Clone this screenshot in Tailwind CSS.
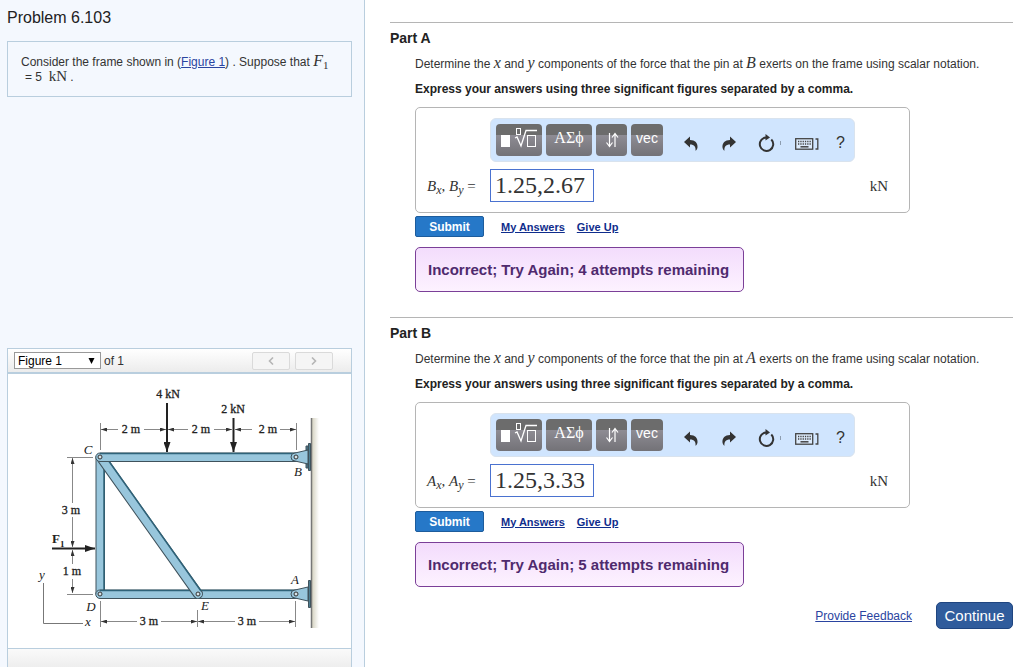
<!DOCTYPE html>
<html lang="en">
<head>
    <meta charset="UTF-8">
    <meta name="viewport" content="width=device-width, initial-scale=1.0">
    <title>Problem 6.103</title>
    <script src="https://cdn.jsdelivr.net/npm/@tailwindcss/browser@4"></script>
</head>
<body class="bg-white font-['Liberation_Sans',Arial,sans-serif] text-xs leading-4 text-[#333]">

    <!-- shared toolbar icons -->
    <svg class="hidden">
        <symbol id="icon-root" viewBox="0 0 36 24">
            <rect x="0" y="11" width="9" height="12" fill="#fff"/>
            <rect x="15.500" y="4.500" width="4" height="6" fill="none" stroke="#fff"/>
            <path d="M14 14l2-1 4 9 5-15.500h11" fill="none" stroke="#fff" stroke-width="1.300"/>
            <rect x="26.500" y="11.500" width="8" height="11" fill="none" stroke="#fff"/>
        </symbol>
        <symbol id="icon-updown" viewBox="0 0 14 16">
            <path d="M4.500 1v13M1.500 10.500l3 4 3-4M10 15V2M7 5.500l3-4 3 4" fill="none" stroke="#fff" stroke-width="1.200"/>
        </symbol>
        <symbol id="icon-undo" viewBox="0 0 14 15">
            <path d="M0 6L6 0.500V4c5 0 8 3 7.500 7.500-.2 1.500-1 2.500-2 3.300C12 11 10.500 8.500 6 8.500v3z" fill="#333"/>
        </symbol>
        <symbol id="icon-reset" viewBox="0 0 17 18">
            <path d="M8.500 3.500A6.700 6.700 0 1 0 13.300 5.500" fill="none" stroke="#333" stroke-width="2"/>
            <path d="M7.500 0l4.500 3.500L7.500 6.500z" fill="#333"/>
        </symbol>
        <symbol id="icon-keyboard" viewBox="0 0 25 12">
            <rect x=".7" y=".7" width="17" height="10.500" fill="#dcebfc" stroke="#444" stroke-width="1.300"/>
            <path d="M3 3.500h13M3 6h13" stroke="#444" stroke-width="1.500" stroke-dasharray="1.300 1"/>
            <path d="M5.500 8.800h8" stroke="#444" stroke-width="1.500"/>
            <path d="M20.500 1h2.300v10h-2.300" fill="none" stroke="#444" stroke-width="1.300"/>
        </symbol>
    </svg>

    <div class="flex min-h-screen">

        <!-- Problem statement and figure -->
        <aside class="flex w-[365px] shrink-0 flex-col border-r border-[#b9cede] bg-[#f4f8fe] pl-[7px] pr-3">
            <h1 class="pt-2 text-base leading-5 text-[#222]">Problem 6.103</h1>
            <div class="mt-[13px] border border-[#b9cede] px-[13px] pt-3 pb-3 leading-[14px]">
                <p class="whitespace-nowrap">Consider the frame shown in (<a href="#figure" class="text-[#2a44a0] underline">Figure 1</a>) . Suppose that <span class="font-['Liberation_Serif',serif] text-base leading-[14px]"><i>F</i><sub class="text-[11px]">1</sub></span></p>
                <p class="pl-1">= 5 &nbsp;<span class="font-['Liberation_Serif',serif] text-[15px] leading-[14px]">kN</span> .</p>
            </div>

            <section id="figure" class="mt-auto">
                <div class="flex h-[25px] items-center border border-[#b9cede] bg-linear-to-b from-white to-[#ececec] pl-1.5 pr-[18px]">
                    <span class="relative flex">
                        <select id="figure-select" aria-label="Figure" class="h-[17px] w-[87px] appearance-none border border-[#999] bg-white pl-[3px] text-xs leading-[14px] text-black">
                            <option>Figure 1</option>
                        </select>
                        <svg class="pointer-events-none absolute top-[6px] right-[6px] h-[6px] w-[7px]" viewBox="0 0 7 6"><path d="M0.500 0h6L3.500 6z" fill="#000"/></svg>
                    </span>
                    <label for="figure-select" class="ml-[3px]">of 1</label>
                    <button aria-label="Previous figure" class="ml-auto flex h-[18px] w-[38px] items-center justify-center rounded-xs border border-[#dadada] bg-[#f5f5f5]">
                        <svg class="h-2 w-[6px]" viewBox="0 0 6 8"><path d="M5 .5L1.500 4 5 7.500" fill="none" stroke="#b5b5b5" stroke-width="1.600"/></svg>
                    </button>
                    <button aria-label="Next figure" class="ml-[5px] flex h-[18px] w-[38px] items-center justify-center rounded-xs border border-[#dadada] bg-[#f5f5f5]">
                        <svg class="h-2 w-[6px]" viewBox="0 0 6 8"><path d="M1 .5L4.500 4 1 7.500" fill="none" stroke="#b5b5b5" stroke-width="1.600"/></svg>
                    </button>
                </div>

                <div class="border-x border-t border-[#b9cede] bg-white">
                    <svg class="block w-full" viewBox="8 374 343 274" font-family="'Liberation Serif', serif" font-size="12" fill="#222">
                        <defs>
                            <linearGradient id="wall">
                                <stop offset="0" stop-color="#cfccb8"/>
                                <stop offset="1" stop-color="#fff"/>
                            </linearGradient>
                            <marker id="dim" viewBox="0 0 6 4" refX="6" refY="2" markerWidth="6" markerHeight="4" markerUnits="userSpaceOnUse" orient="auto">
                                <path d="M0 0l6 2-6 2z" fill="#333"/>
                            </marker>
                            <marker id="force" viewBox="0 0 10 7" refX="10" refY="3.500" markerWidth="10" markerHeight="7" markerUnits="userSpaceOnUse" orient="auto">
                                <path d="M0 0l10 3.500L0 7z" fill="#222"/>
                            </marker>
                        </defs>

                        <!-- wall -->
                        <rect x="311" y="418" width="8" height="210" fill="url(#wall)"/>
                        <path d="M311.500 418v210" stroke="#777" stroke-width="1.500"/>

                        <!-- members -->
                        <g stroke="#3f525c" stroke-width="1">
                            <rect x="96" y="457" width="8.500" height="137" fill="#98c6dc"/>
                            <path d="M104 461v129" stroke="#2f6379" stroke-width="1.500"/>
                            <path d="M100 590h196a4 4 0 0 1 0 8.500H100a4 4 0 0 1 0-8.500z" fill="#98c6dc"/>
                            <path d="M100 590.500h196" stroke="#2f6379" stroke-width="1.500"/>
                            <path d="M102 459L198 594" stroke-width="10" stroke-linecap="round"/>
                            <path d="M102 459L198 594" stroke="#98c6dc" stroke-width="8" stroke-linecap="round"/>
                            <path d="M107 458.500l94 132.500" stroke="#2f6379" stroke-width="1.500"/>
                            <path d="M100 453h196a4 4 0 0 1 0 8.500H100a4 4 0 0 1 0-8.500z" fill="#98c6dc"/>
                            <path d="M100 453.500h196" stroke="#2f6379" stroke-width="1.500"/>
                            <path d="M308 450l-13 3a4 4 0 0 0 0 8l13 3zM308 587l-13 3a4 4 0 0 0 0 8l13 3z" fill="#98c6dc"/>
                            <path d="M308.500 443.500h2v27h-2zM308.500 580.500h2v27h-2z" fill="#4f7d90"/>
                            <path d="M306 446h2v4h-2zM306 464h2v4h-2z" fill="#4f7d90"/>
                        </g>
                        <g fill="#d5e2e8" stroke="#333" stroke-width="1">
                            <circle cx="100" cy="457" r="2"/>
                            <circle cx="296" cy="457" r="2"/>
                            <circle cx="100" cy="594" r="2"/>
                            <circle cx="198" cy="594" r="2"/>
                            <circle cx="296" cy="594" r="2"/>
                        </g>

                        <!-- dimension lines -->
                        <g stroke="#888" stroke-width="1" fill="none">
                            <path d="M100.500 423v27M296.500 423v27M100.500 601v26M197.500 610v17M295.500 601v26M67 457.500h26M67 594.500h26"/>
                            <path d="M43.500 583v40.500H83" stroke="#777"/>
                            <path d="M118 429.500h-17" marker-end="url(#dim)"/>
                            <path d="M144 429.500h22" marker-end="url(#dim)"/>
                            <path d="M188 429.500h-20" marker-end="url(#dim)"/>
                            <path d="M214 429.500h18" marker-end="url(#dim)"/>
                            <path d="M252 429.500h-17" marker-end="url(#dim)"/>
                            <path d="M280 429.500h16" marker-end="url(#dim)"/>
                            <path d="M137 621.500h-36" marker-end="url(#dim)"/>
                            <path d="M161 621.500h36" marker-end="url(#dim)"/>
                            <path d="M235 621.500h-37" marker-end="url(#dim)"/>
                            <path d="M259 621.500h36" marker-end="url(#dim)"/>
                            <path d="M72.500 503v-45" marker-end="url(#dim)"/>
                            <path d="M72.500 517v30" marker-end="url(#dim)"/>
                            <path d="M72.500 564v-14" marker-end="url(#dim)"/>
                            <path d="M72.500 579v14" marker-end="url(#dim)"/>
                        </g>

                        <!-- forces -->
                        <g stroke="#222" stroke-width="2">
                            <path d="M167 403v49" marker-end="url(#force)"/>
                            <path d="M233.500 418v34" marker-end="url(#force)"/>
                            <path d="M52 548.500h43" marker-end="url(#force)"/>
                        </g>

                        <g text-anchor="middle" stroke="#222" stroke-width=".3">
                            <text x="168" y="398">4 kN</text>
                            <text x="233" y="413">2 kN</text>
                            <text x="131" y="433">2 m</text>
                            <text x="201" y="433">2 m</text>
                            <text x="268" y="433">2 m</text>
                            <text x="71" y="514">3 m</text>
                            <text x="72" y="575">1 m</text>
                            <text x="149" y="625">3 m</text>
                            <text x="247" y="625">3 m</text>
                        </g>
                        <g text-anchor="middle" font-style="italic" font-size="13">
                            <text x="88" y="454">C</text>
                            <text x="298" y="476">B</text>
                            <text x="91" y="611">D</text>
                            <text x="205" y="610">E</text>
                            <text x="295" y="584">A</text>
                            <text x="42" y="579">y</text>
                            <text x="88" y="626">x</text>
                        </g>
                        <text x="52" y="543" font-weight="bold" font-size="13">F</text>
                        <text x="60" y="547" font-weight="bold" font-size="9">1</text>
                    </svg>
                </div>
                <div class="h-[19px] border-x border-t border-[#b9cede] bg-linear-to-b from-[#fafafa] to-[#eee]"></div>
            </section>
        </aside>

        <!-- Answer parts -->
        <main class="min-w-0 flex-1 pt-[22px] pr-[11px] pb-8 pl-[25px]">

            <section class="border-t border-[#b5b5b5] pb-[25px]">
                <h2 class="pt-[5px] text-sm leading-5 font-bold text-[#222]">Part A</h2>
                <div class="pl-[25px]">
                    <p class="mt-[7px] h-4">Determine the <i class="font-['Liberation_Serif',serif] text-base leading-4">x</i> and <i class="font-['Liberation_Serif',serif] text-base leading-4">y</i> components of the force that the pin at <i class="font-['Liberation_Serif',serif] text-base leading-4">B</i> exerts on the frame using scalar notation.</p>
                    <p class="mt-[10px] font-bold text-[#222]">Express your answers using three significant figures separated by a comma.</p>

                    <div class="mt-[10px] max-w-[495px] rounded-[5px] border border-[#b5b5b5] py-[10px] pl-[11px]">
                        <div class="ml-[63px] flex h-11 w-[365px] rounded-md border border-[#d9e3ee] bg-[#d0e5fe] pt-[5px] pl-[5px]">
                            <div class="flex gap-1">
                                <button aria-label="Templates" class="flex h-8 w-[46px] items-start justify-center rounded-sm bg-linear-to-b from-[#6c6c6c] from-35% via-[#8e8c94] via-35% to-[#737277]"><svg class="h-6 w-9"><use href="#icon-root"/></svg></button>
                                <button class="h-8 w-[46px] rounded-sm bg-linear-to-b from-[#6c6c6c] from-35% via-[#8e8c94] via-35% to-[#737277] pb-1 font-['Liberation_Serif',serif] text-base text-white">ΑΣϕ</button>
                                <button aria-label="Arrows" class="flex h-8 w-[31px] items-center justify-center rounded-sm bg-linear-to-b from-[#6c6c6c] from-35% via-[#8e8c94] via-35% to-[#737277]"><svg class="h-4 w-[14px]"><use href="#icon-updown"/></svg></button>
                                <button class="h-8 w-8 rounded-sm bg-linear-to-b from-[#6c6c6c] from-35% via-[#8e8c94] via-35% to-[#737277] pb-1 text-sm text-white">vec</button>
                            </div>
                            <div class="flex h-8 items-center pt-[6px] pl-[21px]">
                                <button aria-label="Undo"><svg class="h-[15px] w-[14px]"><use href="#icon-undo"/></svg></button>
                                <button aria-label="Redo" class="ml-6"><svg class="h-[15px] w-[14px] -scale-x-100"><use href="#icon-undo"/></svg></button>
                                <button aria-label="Reset" class="ml-[22px]"><svg class="h-[18px] w-[17px]"><use href="#icon-reset"/></svg></button>
                                <span class="ml-[5px] h-1 w-px bg-[#8d9db0]"></span>
                                <button aria-label="Keyboard" class="ml-[14px] pt-[2px]"><svg class="h-3 w-[25px]"><use href="#icon-keyboard"/></svg></button>
                                <button aria-label="Help" class="ml-4 text-base leading-4 text-[#333]">?</button>
                            </div>
                        </div>
                        <div class="mt-[7px] flex items-center pr-[21px]">
                            <label for="answer-a" class="w-[63px] font-['Liberation_Serif',serif] text-[15px] leading-5"><i>B<sub class="text-xs">x</sub></i>, <i>B<sub class="text-xs">y</sub></i> =</label>
                            <input id="answer-a" type="text" value="1.25,2.67" class="h-[33px] w-[104px] border border-[#4a72d0] bg-white px-1 font-['Liberation_Serif',serif] text-2xl text-[#333]">
                            <span class="ml-auto font-['Liberation_Serif',serif] text-[15px]">kN</span>
                        </div>
                    </div>

                    <div class="mt-[3px] flex items-center text-[11px] font-bold">
                        <button class="h-[21px] w-[69px] rounded-xs border border-[#1d5c9c] bg-[#2678c8] text-xs text-white">Submit</button>
                        <a href="#" class="ml-[17px] text-[#0f2d8c] underline">My Answers</a>
                        <a href="#" class="ml-3 text-[#0f2d8c] underline">Give Up</a>
                    </div>
                    <div class="mt-[10px] h-[45px] w-[329px] rounded-[5px] border border-[#7b3f98] bg-linear-to-b from-[#f3dcfc] to-[#fdf2ff] pl-3 text-[15px] leading-[43px] font-bold whitespace-nowrap text-[#4f2a6e]">Incorrect; Try Again; 4 attempts remaining</div>
                </div>
            </section>

            <section class="border-t border-[#b5b5b5]">
                <h2 class="pt-[5px] text-sm leading-5 font-bold text-[#222]">Part B</h2>
                <div class="pl-[25px]">
                    <p class="mt-[7px] h-4">Determine the <i class="font-['Liberation_Serif',serif] text-base leading-4">x</i> and <i class="font-['Liberation_Serif',serif] text-base leading-4">y</i> components of the force that the pin at <i class="font-['Liberation_Serif',serif] text-base leading-4">A</i> exerts on the frame using scalar notation.</p>
                    <p class="mt-[10px] font-bold text-[#222]">Express your answers using three significant figures separated by a comma.</p>

                    <div class="mt-[10px] max-w-[495px] rounded-[5px] border border-[#b5b5b5] py-[10px] pl-[11px]">
                        <div class="ml-[63px] flex h-11 w-[365px] rounded-md border border-[#d9e3ee] bg-[#d0e5fe] pt-[5px] pl-[5px]">
                            <div class="flex gap-1">
                                <button aria-label="Templates" class="flex h-8 w-[46px] items-start justify-center rounded-sm bg-linear-to-b from-[#6c6c6c] from-35% via-[#8e8c94] via-35% to-[#737277]"><svg class="h-6 w-9"><use href="#icon-root"/></svg></button>
                                <button class="h-8 w-[46px] rounded-sm bg-linear-to-b from-[#6c6c6c] from-35% via-[#8e8c94] via-35% to-[#737277] pb-1 font-['Liberation_Serif',serif] text-base text-white">ΑΣϕ</button>
                                <button aria-label="Arrows" class="flex h-8 w-[31px] items-center justify-center rounded-sm bg-linear-to-b from-[#6c6c6c] from-35% via-[#8e8c94] via-35% to-[#737277]"><svg class="h-4 w-[14px]"><use href="#icon-updown"/></svg></button>
                                <button class="h-8 w-8 rounded-sm bg-linear-to-b from-[#6c6c6c] from-35% via-[#8e8c94] via-35% to-[#737277] pb-1 text-sm text-white">vec</button>
                            </div>
                            <div class="flex h-8 items-center pt-[6px] pl-[21px]">
                                <button aria-label="Undo"><svg class="h-[15px] w-[14px]"><use href="#icon-undo"/></svg></button>
                                <button aria-label="Redo" class="ml-6"><svg class="h-[15px] w-[14px] -scale-x-100"><use href="#icon-undo"/></svg></button>
                                <button aria-label="Reset" class="ml-[22px]"><svg class="h-[18px] w-[17px]"><use href="#icon-reset"/></svg></button>
                                <span class="ml-[5px] h-1 w-px bg-[#8d9db0]"></span>
                                <button aria-label="Keyboard" class="ml-[14px] pt-[2px]"><svg class="h-3 w-[25px]"><use href="#icon-keyboard"/></svg></button>
                                <button aria-label="Help" class="ml-4 text-base leading-4 text-[#333]">?</button>
                            </div>
                        </div>
                        <div class="mt-[7px] flex items-center pr-[21px]">
                            <label for="answer-b" class="w-[63px] font-['Liberation_Serif',serif] text-[15px] leading-5"><i>A<sub class="text-xs">x</sub></i>, <i>A<sub class="text-xs">y</sub></i> =</label>
                            <input id="answer-b" type="text" value="1.25,3.33" class="h-[33px] w-[104px] border border-[#4a72d0] bg-white px-1 font-['Liberation_Serif',serif] text-2xl text-[#333]">
                            <span class="ml-auto font-['Liberation_Serif',serif] text-[15px]">kN</span>
                        </div>
                    </div>

                    <div class="mt-[3px] flex items-center text-[11px] font-bold">
                        <button class="h-[21px] w-[69px] rounded-xs border border-[#1d5c9c] bg-[#2678c8] text-xs text-white">Submit</button>
                        <a href="#" class="ml-[17px] text-[#0f2d8c] underline">My Answers</a>
                        <a href="#" class="ml-3 text-[#0f2d8c] underline">Give Up</a>
                    </div>
                    <div class="mt-[10px] h-[45px] w-[329px] rounded-[5px] border border-[#7b3f98] bg-linear-to-b from-[#f3dcfc] to-[#fdf2ff] pl-3 text-[15px] leading-[43px] font-bold whitespace-nowrap text-[#4f2a6e]">Incorrect; Try Again; 5 attempts remaining</div>
                </div>
            </section>

            <div class="mt-[15px] flex items-center justify-end">
                <a href="#" class="text-[#2a44a0] underline">Provide Feedback</a>
                <button class="ml-6 h-[27px] w-[77px] rounded-[5px] border border-[#1f4580] bg-[#305c9c] text-[15px] leading-5 text-white">Continue</button>
            </div>
        </main>
    </div>
</body>
</html>
